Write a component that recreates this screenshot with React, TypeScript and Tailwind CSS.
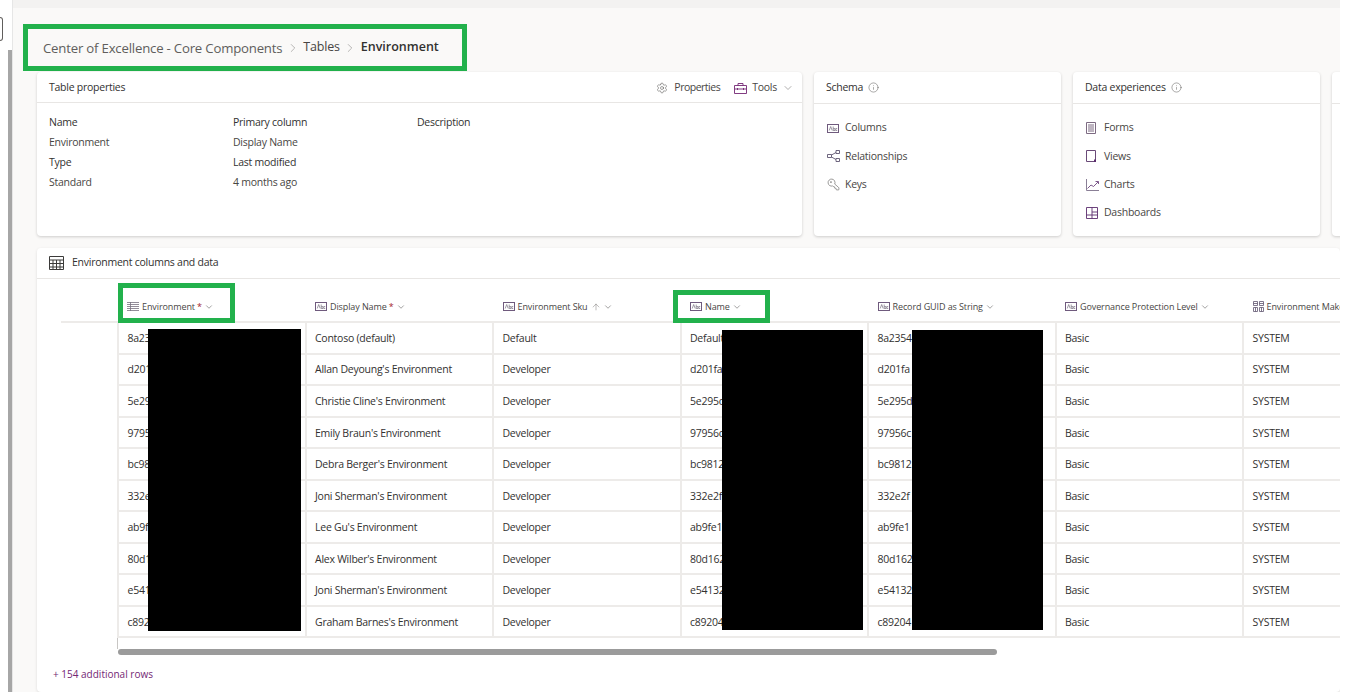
import { Settings, ChevronDown, ChevronRight, Info, ArrowUp, KeyRound } from 'lucide-react';

const font = { fontFamily: '"Open Sans", "Noto Sans", sans-serif' };

const rows = [
    ['8a23', 'Contoso (default)', 'Default', 'Default', '8a2354'],
    ['d201', "Allan Deyoung's Environment", 'Developer', 'd201fa', 'd201fa'],
    ['5e29', "Christie Cline's Environment", 'Developer', '5e295d', '5e295d'],
    ['9795', "Emily Braun's Environment", 'Developer', '97956c', '97956c'],
    ['bc98', "Debra Berger's Environment", 'Developer', 'bc9812', 'bc9812'],
    ['332e', "Joni Sherman's Environment", 'Developer', '332e2f', '332e2f'],
    ['ab9f', "Lee Gu's Environment", 'Developer', 'ab9fe1', 'ab9fe1'],
    ['80d1', "Alex Wilber's Environment", 'Developer', '80d162', '80d162'],
    ['e541', "Joni Sherman's Environment", 'Developer', 'e54132', 'e54132'],
    ['c892', "Graham Barnes's Environment", 'Developer', 'c89204', 'c89204'],
];

function AbcIcon() {
    return (
        <svg viewBox="0 0 12 9" className="h-[9px] w-[12px] shrink-0">
            <rect x="0.5" y="0.5" width="11" height="8" fill="none" stroke="#6f5a7d" />
            <path d="M2.2 6.5 3.7 2.5 5.2 6.5M6.2 2.5v4M6.2 4.6h1.8v1.9h-1.8M10.2 4.5h-1.4v2h1.4" fill="none" stroke="#77707f" strokeWidth="0.7" />
        </svg>
    );
}

function ListIcon() {
    return (
        <svg viewBox="0 0 12 9" className="h-[9px] w-[12px] shrink-0">
            <path d="M0 .5h12M0 2.5h12M0 4.5h12M0 6.5h12M0 8.5h12M3.5 0v9" fill="none" stroke="#77707f" strokeWidth="0.8" />
        </svg>
    );
}

function LookupIcon() {
    return (
        <svg viewBox="0 0 11 11" className="h-[11px] w-[11px] shrink-0">
            <path d="M.5.5h4v4h-4zM6.5.5h4v4h-4zM.5 6.5h4v4h-4zM6.5 6.5h4v4h-4zM.5 2.5h4M6.5 2.5h4M2.5 6.5v4M8.5 6.5v4" fill="none" stroke="#5f5570" strokeWidth="0.8" />
        </svg>
    );
}

function RelationshipIcon() {
    return (
        <svg viewBox="0 0 13 12" className="h-[12px] w-[13px]">
            <path d="M.5 4.5h4v3h-4zM9 .5h3.5v3H9zM9 8.5h3.5v3H9zM4.5 5 9 2.5M4.5 7 9 9.5" fill="none" stroke="#5f5570" strokeWidth="0.9" />
        </svg>
    );
}

function ChartIcon() {
    return (
        <svg viewBox="0 0 13 12" className="h-[12px] w-[13px]">
            <path d="M.5 0v11.5H13" fill="none" stroke="#8a7f96" />
            <path d="M1.5 9.5 5 6l2.5 1.5 4.5-4.5M9.5 2.5H12.5V5" fill="none" stroke="#5c2e6e" strokeWidth="0.8" />
        </svg>
    );
}

function FormsIcon() {
    return (
        <svg viewBox="0 0 10 12" className="h-[12px] w-[10px]">
            <path d="M.5.5h9v11h-9zM2 3h6M2 5h6M2 7h6M2 9h6" fill="none" stroke="#7d6a82" />
        </svg>
    );
}

function ViewsIcon() {
    return (
        <svg viewBox="0 0 10 12" className="h-[12px] w-[10px]">
            <path d="M.5.5h9v11h-9z" fill="none" stroke="#6a4a78" />
            <path d="M8 9.5h2V12H8z" fill="#5c2e6e" />
        </svg>
    );
}

function DashboardIcon() {
    return (
        <svg viewBox="0 0 12 12" className="h-[12px] w-[12px]">
            <path d="M.5.5h11v11H.5zM6 .5v11M.5 8h11M6 5h5.5" fill="none" stroke="#5c2e6e" strokeWidth="0.9" />
        </svg>
    );
}

function ToolboxIcon() {
    return (
        <svg viewBox="0 0 13 11" className="ml-[14px] h-[11px] w-[13px]">
            <path d="M.5 2.5h12v8H.5zM4 2.5V.5h5v2M.5 6h12M3.5 5v2M9.5 5v2" fill="none" stroke="#742774" strokeWidth="0.9" />
        </svg>
    );
}

function GridIcon() {
    return (
        <svg viewBox="0 0 15 14" className="h-[14px] w-[15px] shrink-0">
            <path d="M.5.5h14v13H.5zM.5 4h14M.5 7.5h14M.5 11h14M4 4v9.5M7.5 4v9.5M11 4v9.5" fill="none" stroke="#3b3a39" />
        </svg>
    );
}

function GreenBox({ className, children }: { className: string; children?: React.ReactNode }) {
    return <div className={`border-[5px] border-[#22b14c] ${className}`}>{children}</div>;
}

function HeaderCell({ icon, label, required, sorted, chevron = true }: { icon: React.ReactNode; label: string; required?: boolean; sorted?: boolean; chevron?: boolean }) {
    return (
        <div className="flex items-center whitespace-nowrap text-[9px] tracking-[-0.1px] text-[#484644]">
            {icon}
            <span className="ml-[3px]">{label}</span>
            {required && <span className="ml-[2px] text-[#a4262c]">*</span>}
            {sorted && <ArrowUp size={10} strokeWidth={1} className="ml-[3px] text-[#605e5c]" />}
            {chevron && <ChevronDown size={10} strokeWidth={1.2} className="ml-[2px] text-[#484644]" />}
        </div>
    );
}

function LinkRow({ icon, label }: { icon: React.ReactNode; label: string }) {
    return (
        <div className="flex h-[28.3px] items-center text-[10.5px] text-[#484644]">
            <span className="flex w-[18px] items-center">{icon}</span>
            {label}
        </div>
    );
}

function SideCard({ title, info, children, className }: { title: string; info?: boolean; children?: React.ReactNode; className: string }) {
    return (
        <div className={`h-[164px] shrink-0 rounded-sm bg-white shadow-[0_1px_3px_rgba(0,0,0,0.18)] ${className}`}>
            <div className="flex h-[32px] items-center border-b border-[#e8e6e4] px-[12px] text-[10.5px] text-[#323130]">
                {title}
                {info && <Info size={11} strokeWidth={1} className="ml-[5px] text-[#484644]" />}
            </div>
            <div className="px-[13px] pt-[10px]">{children}</div>
        </div>
    );
}

export default function App() {
    return (
        <div className="relative flex h-[692px] w-[1346px] overflow-hidden bg-white tracking-[-0.25px]" style={font}>
            {/* left rail with page scrollbar */}
            <div className="flex w-[13px] shrink-0 flex-col border-r border-[#e6e6e6]">
                <div className="mt-[17px] h-[24px] w-[3px] rounded-r-sm border border-l-0 border-[#605e5c]" />
                <div className="mt-[9px] ml-[8px] w-[4px] flex-1 bg-[#a6a6a6]" />
            </div>

            <div className="flex w-[1327px] shrink-0 flex-col overflow-hidden bg-[#faf9f8]">
                <div className="h-[8px] shrink-0 bg-[#f3f2f1]" />

                <GreenBox className="mt-[16px] ml-[10px] flex h-[47px] w-[444px] shrink-0 items-center whitespace-nowrap pl-[15px] text-[#605e5c]">
                    <span className="pt-[2px] text-[13.2px] tracking-[-0.2px]">Center of Excellence - Core Components</span>
                    <ChevronRight size={14} strokeWidth={1} className="mx-[3.5px] text-[#8a8886]" />
                    <span className="text-[12.5px] tracking-[-0.2px] text-[#484644]">Tables</span>
                    <ChevronRight size={14} strokeWidth={1} className="mx-[3.5px] text-[#8a8886]" />
                    <span className="text-[12.5px] font-semibold tracking-normal text-[#323130]">Environment</span>
                </GreenBox>

                <div className="mt-px ml-[24px] flex shrink-0 gap-[12px]">
                    <div className="h-[164px] w-[765px] shrink-0 rounded-sm bg-white shadow-[0_1px_3px_rgba(0,0,0,0.18)]">
                        <div className="flex h-[31px] items-center justify-between border-b border-[#e8e6e4] pt-[2px] pr-[8px] pl-[12px] text-[10.5px] text-[#323130]">
                            <span>Table properties</span>
                            <div className="flex items-center text-[#484644]">
                                <Settings size={12} strokeWidth={1} className="mr-[6px]" />
                                <span className="tracking-[-0.5px]">Properties</span>
                                <ToolboxIcon />
                                <span className="ml-[5px]">Tools</span>
                                <ChevronDown size={12} strokeWidth={1} className="ml-[5px] text-[#605e5c]" />
                            </div>
                        </div>
                        <div className="grid grid-cols-[184px_184px_1fr] px-[12px] pt-[9px] text-[10.5px] leading-[20px] text-[#484644]">
                            <div>
                                <div className="text-[#323130]">Name</div>
                                <div>Environment</div>
                                <div className="text-[#323130]">Type</div>
                                <div>Standard</div>
                            </div>
                            <div>
                                <div className="text-[#323130]">Primary column</div>
                                <div>Display Name</div>
                                <div className="text-[#323130]">Last modified</div>
                                <div>4 months ago</div>
                            </div>
                            <div className="text-[#323130]">Description</div>
                        </div>
                    </div>

                    <SideCard title="Schema" info className="w-[247px]">
                        <LinkRow icon={<AbcIcon />} label="Columns" />
                        <LinkRow icon={<RelationshipIcon />} label="Relationships" />
                        <LinkRow icon={<KeyRound size={13} strokeWidth={1} className="-scale-x-100 text-[#484644]" />} label="Keys" />
                    </SideCard>

                    <SideCard title="Data experiences" info className="w-[247px]">
                        <LinkRow icon={<FormsIcon />} label="Forms" />
                        <LinkRow icon={<ViewsIcon />} label="Views" />
                        <LinkRow icon={<ChartIcon />} label="Charts" />
                        <LinkRow icon={<DashboardIcon />} label="Dashboards" />
                    </SideCard>

                    <SideCard title="" className="w-[247px]" />
                </div>

                <div className="mt-[12px] ml-[24px] flex w-[1303px] flex-1 flex-col rounded-sm bg-white shadow-[0_1px_3px_rgba(0,0,0,0.12)]">
                    <div className="flex h-[31px] shrink-0 items-center gap-[8px] border-b border-[#e8e6e4] pl-[12px] text-[10.5px] text-[#323130]">
                        <GridIcon />
                        Environment columns and data
                    </div>

                    <div className="relative ml-[24px] overflow-hidden">
                        <div className="flex h-[44px] border-b-2 border-[#edebe9]">
                            <div className="w-[56px] shrink-0" />
                            <div className="flex w-[188px] shrink-0 items-center pt-[13px] pl-[10px]">
                                <HeaderCell icon={<ListIcon />} label="Environment" required />
                            </div>
                            <div className="flex w-[187.5px] shrink-0 items-center pt-[13px] pl-[10px]">
                                <HeaderCell icon={<AbcIcon />} label="Display Name" required />
                            </div>
                            <div className="flex w-[187.5px] shrink-0 items-center pt-[13px] pl-[10px]">
                                <HeaderCell icon={<AbcIcon />} label="Environment Sku" sorted />
                            </div>
                            <div className="flex w-[187.5px] shrink-0 items-center pt-[13px] pl-[10px]">
                                <HeaderCell icon={<AbcIcon />} label="Name" />
                            </div>
                            <div className="flex w-[187.5px] shrink-0 items-center pt-[13px] pl-[10px]">
                                <HeaderCell icon={<AbcIcon />} label="Record GUID as String" />
                            </div>
                            <div className="flex w-[187.5px] shrink-0 items-center pt-[13px] pl-[10px]">
                                <HeaderCell icon={<AbcIcon />} label="Governance Protection Level" />
                            </div>
                            <div className="flex w-[187.5px] shrink-0 items-center pt-[13px] pl-[10px]">
                                <HeaderCell icon={<LookupIcon />} label="Environment Maker" chevron={false} />
                            </div>
                        </div>

                        <div className="ml-[56px] w-[1312px]">
                            {rows.map((row) => (
                                <div key={row[0]} className="grid h-[31.55px] grid-cols-[187.5px_187.5px_187.5px_187.5px_187.5px_187.5px_187.5px] border-b-2 border-l-2 border-[#edebe9] text-[10.5px] text-[#323130]">
                                    {[row[0], row[1], row[2], row[3], row[4], 'Basic', 'SYSTEM'].map((cell, i) => (
                                        <div key={i} className="flex items-center overflow-hidden whitespace-nowrap border-r-2 border-[#edebe9] pt-[2px] pl-[8.5px]">
                                            {cell}
                                        </div>
                                    ))}
                                </div>
                            ))}
                            <div className="h-[11px] w-px bg-[#c8c6c4]" />
                            <div className="ml-px h-[6px] w-[879px] rounded-sm bg-[#9b9b9b]" />
                        </div>

                        {/* redaction blocks drawn over the grid */}
                        <div className="absolute top-[50px] left-[87px] h-[302px] w-[153px] bg-black" />
                        <div className="absolute top-[51px] left-[661px] h-[300px] w-[141px] bg-black" />
                        <div className="absolute top-[51px] left-[851px] h-[300px] w-[131px] bg-black" />
                    </div>

                    <div className="mt-[12px] ml-[16px] text-[10px] tracking-normal text-[#742774]">+ 154 additional rows</div>
                </div>
            </div>

            {/* right edge */}
            <div className="w-[6px] shrink-0 bg-white" />

            <GreenBox className="pointer-events-none absolute top-[283px] left-[118px] h-[40px] w-[117px]" />
            <GreenBox className="pointer-events-none absolute top-[290px] left-[673px] h-[33px] w-[97px]" />
        </div>
    );
}
